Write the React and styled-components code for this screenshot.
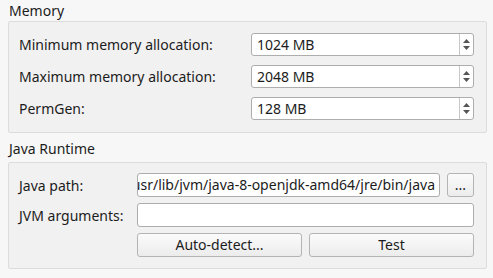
import React from 'react';
import styled, { createGlobalStyle } from 'styled-components';

const GlobalStyle = createGlobalStyle`
  html, body {
    margin: 0;
    padding: 0;
    background: #f7f7f7;
  }
  body {
    font-family: 'Noto Sans', 'DejaVu Sans', sans-serif;
    font-size: 14px;
    color: #1c1c1c;
  }
`

const Page = styled.div`
  display: flex;
  flex-direction: column;
  width: 493px;
  height: 278px;
  padding: 0 6px 0 8px;
  box-sizing: border-box;
`

const GroupTitle = styled.div`
  height: ${props => props.h}px;
  line-height: ${props => props.lh}px;
  padding-left: 1px;
`

const GroupBox = styled.div`
  display: grid;
  grid-template-columns: ${props => props.labelWidth}px minmax(0, 1fr);
  row-gap: ${props => props.gap}px;
  align-items: center;
  padding: ${props => props.pad};
  background: #f1f1f1;
  border: 1px solid #dcdcdc;
  border-radius: 2px;
`

const Label = styled.div`
  white-space: nowrap;
`

const FieldRow = styled.div`
  display: flex;
  gap: 7px;
  min-width: 0;
`

const SpinBox = styled.div`
  display: flex;
  height: 23px;
  box-sizing: border-box;
  background: #fff;
  border: 1px solid #adadad;
  border-radius: 3px;
`

const SpinText = styled.div`
  flex: 1;
  padding-left: 5px;
  line-height: 21px;
`

const SpinArrows = styled.div`
  display: flex;
  flex-direction: column;
  justify-content: center;
  align-items: center;
  gap: 3px;
  width: 13px;
  border-left: 1px solid #c8c8c8;
`

const LineEdit = styled.div`
  display: flex;
  justify-content: flex-end;
  flex: 1;
  min-width: 0;
  height: 24px;
  box-sizing: border-box;
  overflow: hidden;
  padding: 0 4px;
  background: #fff;
  border: 1px solid #adadad;
  border-radius: 3px;
  line-height: 22px;
  white-space: nowrap;
`

const Button = styled.div`
  flex: ${props => props.wide ? 1 : '0 0 27px'};
  height: 24px;
  box-sizing: border-box;
  text-align: center;
  line-height: 21px;
  background: linear-gradient(#fbfbfb, #ececec);
  border: 1px solid #b4b4b4;
  border-radius: 3px;
`

const Arrow = ({ up }) => (
  <svg width="7" height="4" viewBox="0 0 7 4">
    <path d={up ? 'M0 4 L3.5 0 L7 4 Z' : 'M0 0 L3.5 4 L7 0 Z'} fill="#555" />
  </svg>
)

const Spin = ({ value }) => (
  <SpinBox>
    <SpinText>{value}</SpinText>
    <SpinArrows>
      <Arrow up />
      <Arrow />
    </SpinArrows>
  </SpinBox>
)

const memory = [
  ['Minimum memory allocation:', '1024 MB'],
  ['Maximum memory allocation:', '2048 MB'],
  ['PermGen:', '128 MB'],
]

const App = () => {
  return (
    <>
      <GlobalStyle />
      <Page>
        <GroupTitle h={21} lh={22}>Memory</GroupTitle>
        <GroupBox labelWidth={232} gap={9} pad="11px 12px 12px 10px">
          {memory.map(([label, value]) => (
            <React.Fragment key={label}>
              <Label>{label}</Label>
              <Spin value={value} />
            </React.Fragment>
          ))}
        </GroupBox>
        <GroupTitle h={29} lh={31}>Java Runtime</GroupTitle>
        <GroupBox labelWidth={118} gap={6} pad="10px 12px 11px 10px">
          <Label>Java path:</Label>
          <FieldRow>
            <LineEdit>/usr/lib/jvm/java-8-openjdk-amd64/jre/bin/java</LineEdit>
            <Button>...</Button>
          </FieldRow>
          <Label>JVM arguments:</Label>
          <LineEdit />
          <div />
          <FieldRow>
            <Button wide>Auto-detect...</Button>
            <Button wide>Test</Button>
          </FieldRow>
        </GroupBox>
      </Page>
    </>
  );
};

export default App;
